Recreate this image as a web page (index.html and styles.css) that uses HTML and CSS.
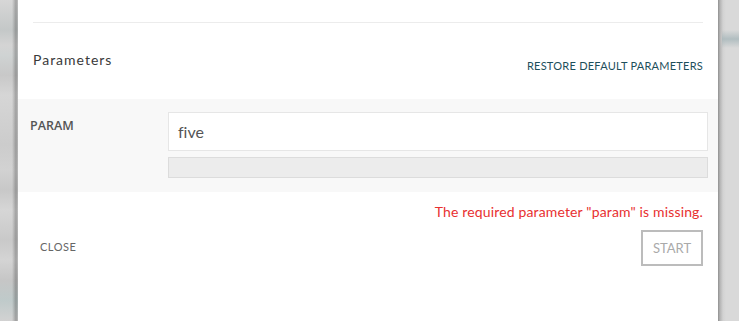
FILE: index.html
```html
<!DOCTYPE html>
<html>
<head>
<meta charset="utf-8">
<link rel="stylesheet" href="styles.css">
</head>
<body>
<div class="screen">
  <div class="backdrop left"></div>
  <div class="dialog">
    <div class="divider"></div>
    <div class="header">
      <div class="title">Parameters</div>
      <a class="restore">RESTORE DEFAULT PARAMETERS</a>
    </div>
    <div class="params">
      <div class="label">PARAM</div>
      <div class="field">
        <div class="input">five</div>
        <div class="bar"></div>
      </div>
    </div>
    <div class="error">The required parameter "param" is missing.</div>
    <div class="footer">
      <a class="close">CLOSE</a>
      <button class="start">START</button>
    </div>
  </div>
  <div class="backdrop right"></div>
</div>
</body>
</html>
```
FILE: styles.css
```css
html, body {
  margin: 0;
  padding: 0;
  width: 739px;
  height: 321px;
  overflow: hidden;
  font-family: Lato, "Open Sans", sans-serif;
  font-variant-ligatures: none;
}
.screen {
  display: flex;
  height: 321px;
}
.backdrop {
  flex: none;
  height: 100%;
}
.backdrop.left {
  width: 18px;
  background:
    linear-gradient(to right, rgba(0,0,0,0) 0, rgba(0,0,0,0) 12px, rgba(0,0,0,0.25) 16px, rgba(0,0,0,0.1) 18px),
    linear-gradient(to bottom, #d7d7d7 0, #c4c8c8 30px, #d4d4d4 45px, #cfd3d3 55px, #c8c8c8 75px, #d6d6d6 95px, #cccccc 145px, #d2d2d2 170px, #c8c8c8 190px, #d6d6d6 210px, #c9c9c9 240px, #d4d4d4 260px, #c6c6c6 280px, #bfcaca 300px, #d2d2d2 321px);
}
.backdrop.right {
  width: 21px;
  background:
    linear-gradient(to right, #8f8f8f 0, #b5b5b5 2px, #d2d2d2 5px, #d9d9d9 8px),
    #d9d9d9;
  position: relative;
}
.backdrop.right::after {
  content: "";
  position: absolute;
  left: 4px;
  right: 0;
  top: 30px;
  height: 18px;
  background: linear-gradient(to bottom, rgba(160,178,182,0), rgba(160,178,182,0.7), rgba(160,178,182,0));
}
.dialog {
  flex: none;
  width: 700px;
  height: 100%;
  background: #fff;
  display: flex;
  flex-direction: column;
}
.divider {
  margin: 22px 15px 0;
  height: 1px;
  background: #ececec;
}
.header {
  height: 76px;
  display: flex;
  justify-content: space-between;
  align-items: flex-start;
  padding: 0 15px;
}
.title {
  margin-top: 28px;
  font-size: 14px;
  color: #3a3a3a;
  letter-spacing: 1px;
}
.restore {
  margin-top: 36px;
  font-size: 11px;
  color: #1d4f5b;
  letter-spacing: 0.25px;
}
.params {
  background: #f8f8f8;
  height: 93px;
  display: flex;
  padding: 13px 10px 0 12px;
  box-sizing: border-box;
}
.label {
  width: 138px;
  flex: none;
  font-family: "Open Sans", Lato, sans-serif;
  font-size: 12.5px;
  font-weight: 600;
  color: #555;
  margin-top: 5px;
}
.field {
  flex: 1;
  display: flex;
  flex-direction: column;
  gap: 6px;
}
.input {
  height: 39px;
  box-sizing: border-box;
  background: #fff;
  border: 1px solid #e6e6e6;
  padding: 0 9px;
  font-size: 16px;
  line-height: 37px;
  color: #555;
}
.bar {
  height: 21px;
  box-sizing: border-box;
  background: #ececec;
  border: 1px solid #dcdcdc;
}
.error {
  margin-top: 11px;
  padding: 0 15px;
  text-align: right;
  font-size: 14px;
  color: #e83030;
  letter-spacing: 0.15px;
}
.footer {
  display: flex;
  justify-content: space-between;
  align-items: center;
  padding: 0 15px 0 22px;
  margin-top: 10px;
}
.close {
  font-size: 11px;
  color: #666;
  margin-top: -4px;
  letter-spacing: 0.5px;
}
.start {
  width: 62px;
  height: 36px;
  box-sizing: border-box;
  background: #fff;
  border: 2px solid #bcbcbc;
  font-family: Lato, "Open Sans", sans-serif;
  font-size: 13px;
  color: #aaa;
  padding: 0;
}
```
